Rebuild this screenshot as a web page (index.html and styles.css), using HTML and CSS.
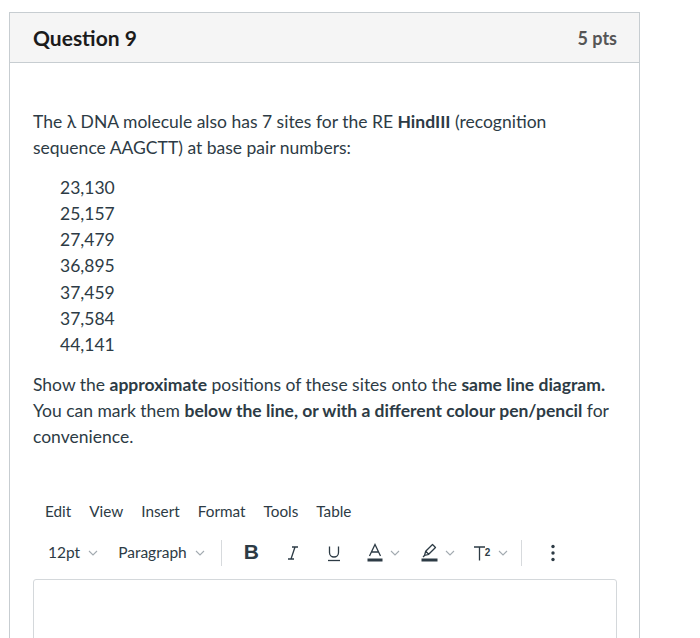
FILE: index.html
```html
<!DOCTYPE html>
<html>
<head>
<meta charset="utf-8">
<link rel="stylesheet" href="styles.css">
</head>
<body>
<div class="card">
  <div class="card-header">
    <h2 class="q-title">Question 9</h2>
    <span class="q-points">5 pts</span>
  </div>
  <div class="card-body">
    <p class="para">The λ DNA molecule also has 7 sites for the RE <strong>HindIII</strong> (recognition sequence AAGCTT) at base pair numbers:</p>
    <div class="sites">
      <div>23,130</div>
      <div>25,157</div>
      <div>27,479</div>
      <div>36,895</div>
      <div>37,459</div>
      <div>37,584</div>
      <div>44,141</div>
    </div>
    <p class="para">Show the <strong>approximate</strong> positions of these sites onto the <strong>same line diagram.</strong> You can mark them <strong>below the line, or with a different colour pen/pencil</strong> for convenience.</p>

    <div class="editor">
      <div class="menubar">
        <span>Edit</span><span>View</span><span>Insert</span><span>Format</span><span>Tools</span><span>Table</span>
      </div>
      <div class="toolbar">
        <span class="tb-drop">12pt<svg class="chev" viewBox="0 0 10 6"><path d="M1 1l4 4 4-4"/></svg></span>
        <span class="tb-drop para-drop">Paragraph<svg class="chev" viewBox="0 0 10 6"><path d="M1 1l4 4 4-4"/></svg></span>
        <span class="sep"></span>
        <span class="ic ic-b">B</span>
        <span class="ic ic-i">
          <svg width="14" height="18" viewBox="0 0 14 18"><path d="M6 3h6M2 15h6M9 3L5 15" fill="none" stroke="#2d3b45" stroke-width="1.3"/></svg>
        </span>
        <span class="ic ic-u">
          <svg width="14" height="18" viewBox="0 0 14 18"><path d="M2.5 2.5v6a4.5 4.5 0 0 0 9 0v-6" fill="none" stroke="#2d3b45" stroke-width="1.3"/><path d="M1 16.5h12" stroke="#2d3b45" stroke-width="1.3"/></svg>
        </span>
        <span class="ic ic-a">
          <svg width="16" height="20" viewBox="0 0 16 20"><path d="M2.5 13L8 1.5 13.5 13M4.5 9h7" fill="none" stroke="#2d3b45" stroke-width="1.3"/><rect x="0.5" y="15.5" width="15" height="3" fill="#2d3b45"/></svg>
          <svg class="chev" viewBox="0 0 10 6"><path d="M1 1l4 4 4-4"/></svg>
        </span>
        <span class="ic ic-h">
          <svg width="17" height="20" viewBox="0 0 17 20"><path d="M3.5 12.5l1.2-4.2 6.8-6.8 3 3-6.8 6.8z M4.7 8.3l3 3" fill="none" stroke="#2d3b45" stroke-width="1.3" stroke-linejoin="round"/><path d="M3.5 12.5l-1.5 1.5" stroke="#2d3b45" stroke-width="1.3"/><rect x="0.5" y="15.5" width="16" height="3" fill="#2d3b45"/></svg>
          <svg class="chev" viewBox="0 0 10 6"><path d="M1 1l4 4 4-4"/></svg>
        </span>
        <span class="ic ic-t">
          <svg width="19" height="20" viewBox="0 0 19 20"><path d="M1 4h11M6.5 4V17.5" fill="none" stroke="#2d3b45" stroke-width="1.3"/></svg><span class="sup2">2</span>
          <svg class="chev" viewBox="0 0 10 6"><path d="M1 1l4 4 4-4"/></svg>
        </span>
        <span class="sep sep2"></span>
        <span class="ic ic-more">
          <svg width="4" height="18" viewBox="0 0 4 18"><circle cx="2" cy="2.5" r="1.7" fill="#2d3b45"/><circle cx="2" cy="9" r="1.7" fill="#2d3b45"/><circle cx="2" cy="15.5" r="1.7" fill="#2d3b45"/></svg>
        </span>
      </div>
      <div class="edit-area"></div>
    </div>
  </div>
</div>
</body>
</html>
```
FILE: styles.css
```css
html, body {
  margin: 0;
  padding: 0;
  background: #fff;
}
body {
  font-family: Lato, "Open Sans", sans-serif;
  color: #2d3b45;
  padding: 12px 0 0 9px;
}
.card {
  width: 631px;
  border: 1px solid #c7cdd1;
  border-bottom: none;
  height: 700px;
  box-sizing: border-box;
}
.card-header {
  height: 49px;
  background: #f5f5f5;
  border-bottom: 1px solid #c7cdd1;
  display: flex;
  align-items: center;
  justify-content: space-between;
  padding: 0 22px 0 23px;
}
.q-title {
  margin: 0;
  font-size: 21px;
  font-weight: 700;
  color: #1b1b1b;
}
.q-points {
  font-size: 18px;
  font-weight: 700;
  color: #555;
}
.card-body {
  padding: 46px 22px 0 23px;
  font-size: 17.5px;
  line-height: 26.3px;
}
.para {
  margin: 0 0 13px 0;
}
.para strong { font-weight: 700; }
.sites {
  padding-left: 27px;
  margin-bottom: 13px;
}
.editor {
  margin-top: 50px;
}
.menubar {
  display: flex;
  gap: 18px;
  padding-left: 12px;
  font-size: 15.3px;
  line-height: 20px;
}
.toolbar {
  display: flex;
  align-items: center;
  height: 30px;
  margin-top: 17px;
  padding-left: 15px;
  font-size: 15.5px;
}
.tb-drop {
  display: inline-flex;
  align-items: center;
}
.tb-drop .chev { margin-left: 8px; }
.para-drop { margin-left: 20px; }
.chev {
  width: 10px;
  height: 6px;
  fill: none;
  stroke: #a3abb1;
  stroke-width: 1.1;
}
.sep {
  width: 1px;
  height: 26px;
  background: #d7dadd;
  margin-left: 16px;
}
.ic {
  display: inline-flex;
  align-items: center;
}
.ic .chev { margin-left: 7px; }
.ic-b {
  width: 17px;
  justify-content: center;
  margin-left: 21px;
  font-family: "Liberation Sans", sans-serif;
  font-weight: 700;
  font-size: 21px;
}
.ic-i { margin-left: 26px; }
.ic-u { margin-left: 27px; }
.ic-a { margin-left: 26px; }
.ic-h { margin-left: 21px; }
.ic-t { margin-left: 18px; position: relative; }
.ic-t .sup2 {
  position: absolute;
  left: 12px;
  top: -3px;
  font-family: "Liberation Sans", sans-serif;
  font-size: 10px;
  font-weight: 700;
}
.ic-t .chev { margin-left: 6px; }
.sep2 { margin-left: 13px; }
.ic-more { margin-left: 29px; }
.edit-area {
  margin-top: 11px;
  height: 120px;
  border: 1px solid #d4d8db;
  border-radius: 3px;
}
```
